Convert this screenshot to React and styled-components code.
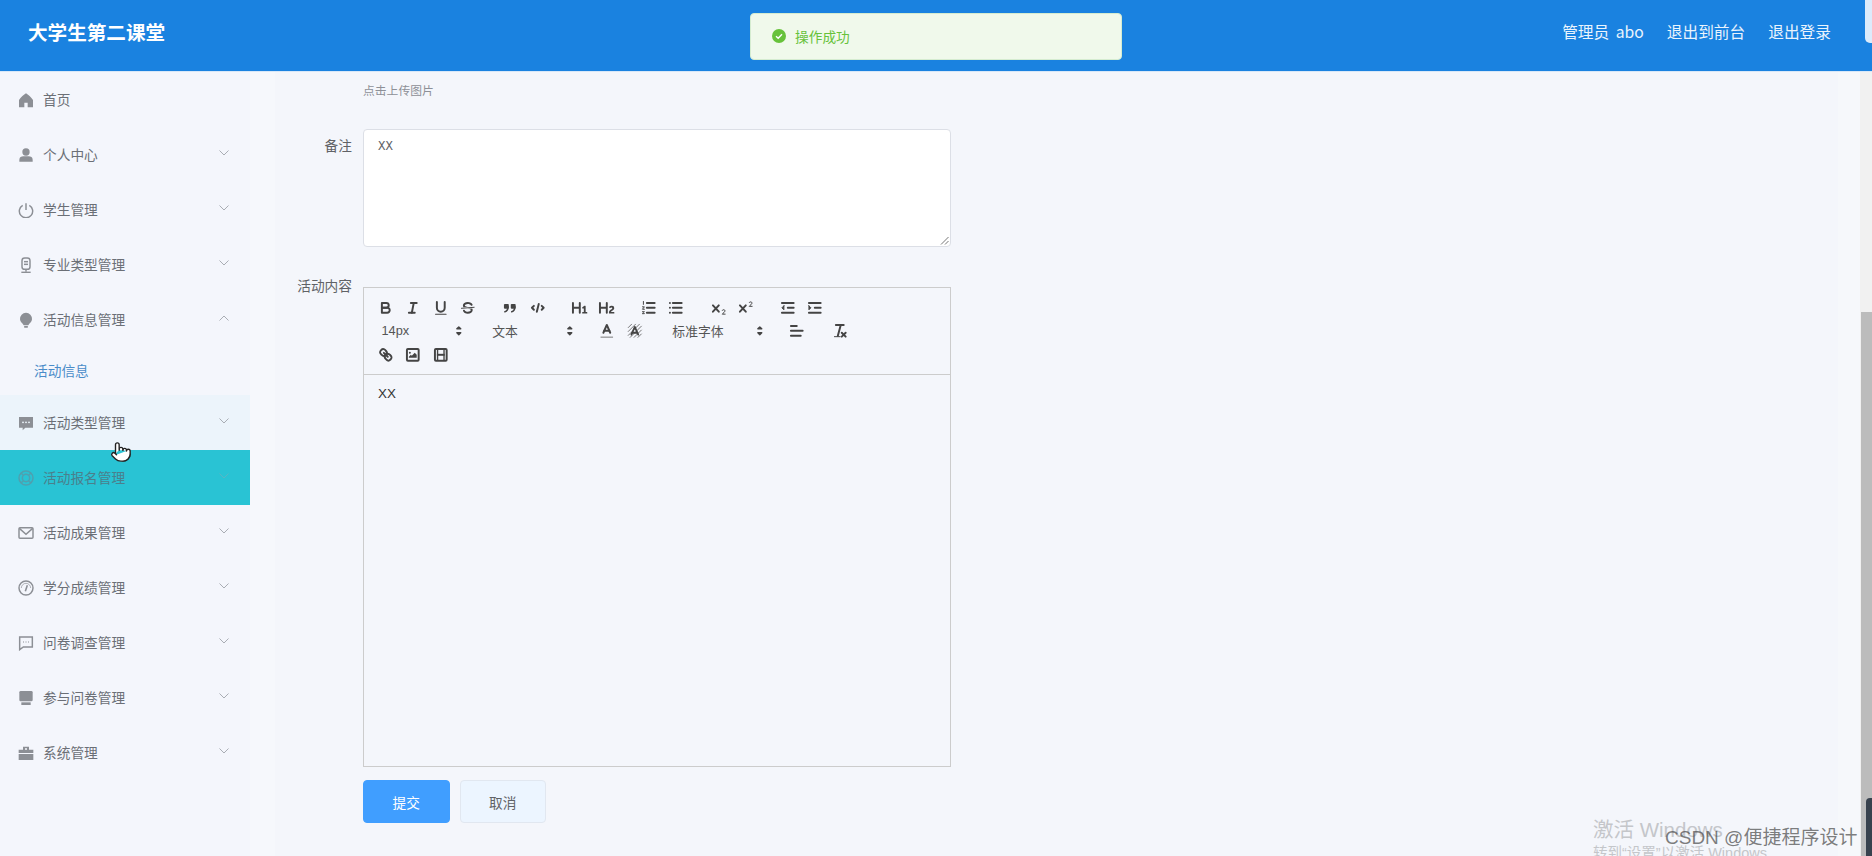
import React from 'react'
import styled, { createGlobalStyle } from 'styled-components'
import { Pointer } from 'lucide-react'

const GlobalStyle = createGlobalStyle`
  html, body {
    margin: 0;
    height: 100%;
    overflow: hidden;
    background: #f4f6fb;
    font-family: "Liberation Sans", "Noto Sans CJK SC", sans-serif;
  }
  * { box-sizing: border-box; }
`

const Page = styled.div`
  position: relative;
  width: 100vw;
  height: 100vh;
  overflow: hidden;
  display: flex;
  flex-direction: column;
`

const Header = styled.header`
  flex: 0 0 71px;
  background: #1a82e0;
  display: flex;
  align-items: center;
  justify-content: space-between;
  padding: 0 41px 8px 28px;
  color: #fff;
`

const Title = styled.div`
  font-size: 19.6px;
  font-weight: 700;
`

const HeaderNav = styled.nav`
  display: flex;
  gap: 23px;
  font-family: "Noto Sans CJK SC", sans-serif;
  font-size: 15.7px;
  word-spacing: 3px;
  color: #eaf4fd;
`

const CornerTab = styled.div`
  position: absolute;
  top: 0;
  right: 0;
  width: 7px;
  height: 43px;
  background: #dcebfb;
  border-bottom-left-radius: 5px;
`

const Toast = styled.div`
  position: absolute;
  top: 13px;
  left: 750px;
  width: 372px;
  height: 47px;
  display: flex;
  align-items: center;
  gap: 9px;
  padding: 0 0 2px 21px;
  background: #f0f9eb;
  border: 1px solid #d5ecd0;
  border-radius: 4px;
  color: #67c23a;
  font-size: 13.7px;
`

const Body = styled.div`
  flex: 1;
  display: flex;
  min-height: 0;
  border-top: 1px solid #d8e8f8;
`

const Sidebar = styled.aside`
  flex: 0 0 250px;
  background: #f4f6fc;
  display: flex;
  flex-direction: column;
`

const MenuRow = styled.div`
  height: ${p => (p.$sub ? '48px' : '55px')};
  flex-shrink: 0;
  display: flex;
  align-items: center;
  gap: 10px;
  padding: 0 21px 0 ${p => (p.$sub ? '34px' : '19px')};
  font-size: 13.7px;
  color: ${p => (p.$sub ? '#4a8cc9' : p.$active ? '#4b7f8c' : '#6b6f76')};
  background: ${p => (p.$active ? '#29c3d4' : p.$hover ? '#ecf4fb' : 'transparent')};

  svg.menu-icon {
    flex: 0 0 16px;
    margin-left: -1px;
    margin-right: -1px;
    color: ${p => (p.$active ? '#4fa0af' : '#8c8f95')};
  }
`

const MenuLabel = styled.span`
  padding-bottom: 2px;
`

const Chevron = styled.svg`
  margin-left: auto;
  margin-bottom: 4px;
  width: 10px;
  height: 6px;
  fill: none;
  stroke: ${p => (p.$active ? '#58b5c4' : '#a9adb4')};
  stroke-width: 1;
`

const Cursor = styled.div`
  position: absolute;
  left: 110px;
  top: 441px;
  width: 22px;
  height: 22px;
  color: #222;
  svg { fill: #fff; }
`

const Gutter = styled.div`
  flex: 0 0 25px;
  background: #f6f8fc;
`

const Main = styled.main`
  flex: 1;
  padding-top: 10px;
  background: #f4f6fb;
`

const Hint = styled.div`
  margin-left: 88px;
  height: 18px;
  line-height: 18px;
  font-size: 11.8px;
  color: #8d9097;
`

const FormRow = styled.div`
  display: flex;
  align-items: flex-start;
  margin-top: ${p => p.$gap}px;
`

const Label = styled.label`
  flex: 0 0 88px;
  padding-right: 11px;
  text-align: right;
  font-size: 13.7px;
  line-height: ${p => p.$lh}px;
  color: #606266;
`

const Memo = styled.div`
  position: relative;
  width: 588px;
  height: 118px;
  padding: 8px 14px;
  background: #fff;
  border: 1px solid #dcdfe6;
  border-radius: 4px;
  font-family: "Liberation Mono", monospace;
  font-size: 12.4px;
  line-height: 18px;
  color: #606266;
`

const ResizeGrip = styled.svg`
  position: absolute;
  right: 1px;
  bottom: 1px;
  width: 9px;
  height: 9px;
  stroke: #777;
  stroke-width: 1;
`

const Editor = styled.div`
  width: 588px;
  height: 480px;
  display: flex;
  flex-direction: column;
  border: 1px solid #ccc;
`

const Toolbar = styled.div`
  display: flex;
  flex-wrap: wrap;
  padding: 8px 8px 7px;
  border-bottom: 1px solid #ccc;
`

const Group = styled.div`
  display: flex;
  margin-right: 14.7px;
`

const ToolButton = styled.div`
  width: 27.4px;
  height: 23.5px;
  display: flex;
  align-items: center;
  justify-content: center;
  svg { width: 17.6px; height: 17.6px; }
`

const Picker = styled.div`
  width: ${p => p.$w}px;
  height: 23.5px;
  display: flex;
  align-items: center;
  justify-content: space-between;
  padding-left: 9.5px;
  font-size: 12.8px;
  color: #555;
  span { padding-bottom: 2px; }
  svg { width: 17.6px; height: 17.6px; margin-right: 0; }
`

const EditorBody = styled.div`
  flex: 1;
  padding: 10px 14px;
  font-size: 13.4px;
  line-height: 18px;
  color: #333;
`

const Actions = styled.div`
  display: flex;
  gap: 10px;
  margin: 13px 0 0 88px;
`

const Button = styled.div`
  width: 86.5px;
  height: 43px;
  display: flex;
  align-items: center;
  justify-content: center;
  border-radius: 4px;
  font-size: 13.7px;
  border: 1px solid ${p => (p.$primary ? '#409eff' : '#e1e7f0')};
  background: ${p => (p.$primary ? '#409eff' : '#ecf5ff')};
  color: ${p => (p.$primary ? '#fff' : '#606266')};
`

const RightStrip = styled.div`
  flex: 0 0 22px;
  background: #f6f8fb;
`

const ScrollTrack = styled.div`
  flex: 0 0 12px;
  background: #f1f1f1;
  padding-top: 240px;
  padding-left: 1px;
`

const ScrollThumb = styled.div`
  height: 100%;
  background: #bcbcbc;
`

const TrayEdge = styled.div`
  position: absolute;
  right: 0;
  bottom: 0;
  width: 6px;
  height: 58px;
  background: #38424e;
  border-top-left-radius: 4px;
`

const Activation = styled.div`
  position: absolute;
  left: 1593px;
  top: 817px;
  color: #c4c6ca;
  font-size: 20.5px;
  line-height: 26px;
  small {
    display: block;
    font-size: 14.5px;
    line-height: 20px;
  }
`

const Watermark = styled.div`
  position: absolute;
  left: 1665px;
  top: 825px;
  font-size: 19px;
  line-height: 26px;
  white-space: nowrap;
  color: rgba(70, 70, 70, 0.7);
`

const Q = ({ children }) => (
  <svg viewBox="0 0 18 18" fill="none" stroke="#444" strokeWidth="2" strokeLinecap="round" strokeLinejoin="round">
    {children}
  </svg>
)

const F = { fill: '#444', stroke: 'none' }
const thin = { strokeWidth: 1 }

const xMark = (
  <>
    <line x1="3" y1="6.5" x2="9" y2="13" />
    <line x1="9" y1="6.5" x2="3" y2="13" />
  </>
)

const toolIcons = {
  bold: <Q><path d="M5,4H9.5A2.5,2.5,0,0,1,12,6.5v0A2.5,2.5,0,0,1,9.5,9H5V4Z" /><path d="M5,9h5.5A2.5,2.5,0,0,1,13,11.5v0A2.5,2.5,0,0,1,10.5,14H5V9Z" /></Q>,
  italic: <Q><line x1="7" x2="13" y1="4" y2="4" /><line x1="5" x2="11" y1="14" y2="14" /><line x1="8" x2="10" y1="14" y2="4" /></Q>,
  underline: <Q><path d="M5,3V9a4,4,0,0,0,4,4H9a4,4,0,0,0,4-4V3" /><rect {...F} x="3" y="15" width="12" height="1" rx=".5" /></Q>,
  strike: (
    <Q>
      <line {...thin} x1="15.5" x2="2.5" y1="8.5" y2="9.5" />
      <path {...F} d="M9.007,8C6.542,7.791,6,7.519,6,6.5,6,5.792,7.283,5,9,5c1.571,0,2.765.679,2.969,1.309a1,1,0,0,0,1.9-.617C13.356,4.106,11.354,3,9,3,6.2,3,4,4.538,4,6.5a3.2,3.2,0,0,0,.5,1.843Z" />
      <path {...F} d="M8.984,10C11.457,10.208,12,10.479,12,11.5c0,.708-1.283,1.5-3,1.5-1.571,0-2.765-.679-2.969-1.309a1,1,0,1,0-1.9.617C4.644,13.894,6.646,15,9,15c2.8,0,5-1.538,5-3.5a3.2,3.2,0,0,0-.5-1.843Z" />
    </Q>
  ),
  quote: (
    <Q>
      <rect {...F} x="3" y="5" width="5" height="5" rx="1" />
      <rect {...F} x="10" y="5" width="5" height="5" rx="1" />
      <path strokeWidth="1.6" d="M7.2,8 C7.2,11 6,12.5 4,13" />
      <path strokeWidth="1.6" d="M14.2,8 C14.2,11 13,12.5 11,13" />
    </Q>
  ),
  code: <Q><polyline points="5 7 3 9 5 11" /><polyline points="13 7 15 9 13 11" /><line x1="10" x2="8" y1="5" y2="13" /></Q>,
  h1: (
    <Q>
      <path {...F} d="M10,4V14a1,1,0,0,1-2,0V10H3v4a1,1,0,0,1-2,0V4A1,1,0,0,1,3,4V8H8V4a1,1,0,0,1,2,0Zm6.06787,9.209H14.98975V7.59863a.54085.54085,0,0,0-.605-.60547h-.62744a1.01119,1.01119,0,0,0-.748.29688L11.645,8.56641a.5435.5435,0,0,0-.022.8584l.28613.30762a.53861.53861,0,0,0,.84717.0332l.09912-.08789a1.2137,1.2137,0,0,0,.2417-.35254h.02246s-.01123.30859-.01123.60547V13.209H12.041a.54085.54085,0,0,0-.605.60547v.43945a.54085.54085,0,0,0,.605.60547h4.02686a.54085.54085,0,0,0,.605-.60547v-.43945A.54085.54085,0,0,0,16.06787,13.209Z" />
    </Q>
  ),
  h2: (
    <Q>
      <path {...F} d="M16.73975,13.81445v.43945a.54085.54085,0,0,1-.605.60547H11.855a.58392.58392,0,0,1-.64893-.60547V14.0127c0-2.90527,3.39941-3.42187,3.39941-4.55469a.77675.77675,0,0,0-.84717-.78125,1.17684,1.17684,0,0,0-.83594.38477c-.2749.26367-.561.374-.85791.13184l-.4292-.34082c-.30811-.24219-.38525-.51758-.1543-.81445a2.97155,2.97155,0,0,1,2.45361-1.17676,2.45393,2.45393,0,0,1,2.68408,2.40918c0,2.45312-3.1792,2.92676-3.27832,3.93848h2.79443A.54085.54085,0,0,1,16.73975,13.81445ZM9,3A.99974.99974,0,0,0,8,4V8H3V4A1,1,0,0,0,1,4V14a1,1,0,0,0,2,0V10H8v4a1,1,0,0,0,2,0V4A.99974.99974,0,0,0,9,3Z" />
    </Q>
  ),
  ol: (
    <Q>
      <line x1="7" x2="15" y1="4" y2="4" />
      <line x1="7" x2="15" y1="9" y2="9" />
      <line x1="7" x2="15" y1="14" y2="14" />
      <line {...thin} x1="3.5" x2="3.5" y1="2.5" y2="5.5" />
      <path {...thin} d="M2.5,8 h2 l-2,2.5 h2" />
      <path {...thin} d="M2.5,13 h2 l-1,1 l1,1 h-2" />
    </Q>
  ),
  ul: (
    <Q>
      <line x1="6" x2="15" y1="4" y2="4" />
      <line x1="6" x2="15" y1="9" y2="9" />
      <line x1="6" x2="15" y1="14" y2="14" />
      <line x1="3" x2="3" y1="4" y2="4" />
      <line x1="3" x2="3" y1="9" y2="9" />
      <line x1="3" x2="3" y1="14" y2="14" />
    </Q>
  ),
  sub: <Q>{xMark}<path {...thin} d="M12.5,11.7 c.3-1.2,3-1.1,2.8.6 c-.2,1.2-1.9,2-2.8,3.2 h3" /></Q>,
  sup: <Q>{xMark}<path {...thin} d="M12.5,3.7 c.3-1.2,3-1.1,2.8.6 c-.2,1.2-1.9,2-2.8,3.2 h3" /></Q>,
  outdent: (
    <Q>
      <line x1="3" x2="15" y1="14" y2="14" />
      <line x1="3" x2="15" y1="4" y2="4" />
      <line x1="9" x2="15" y1="9" y2="9" />
      <polygon strokeWidth="1" fill="#444" points="5 7 5 11 3 9 5 7" />
    </Q>
  ),
  indent: (
    <Q>
      <line x1="3" x2="15" y1="14" y2="14" />
      <line x1="3" x2="15" y1="4" y2="4" />
      <line x1="9" x2="15" y1="9" y2="9" />
      <polygon strokeWidth="1" fill="#444" points="3 7 3 11 5 9 3 7" />
    </Q>
  ),
  color: (
    <Q>
      <line {...thin} x1="3" x2="15" y1="15.5" y2="15.5" stroke="#777" />
      <polyline points="5.5 11 9 3 12.5 11" />
      <line x1="11.63" x2="6.38" y1="9" y2="9" />
    </Q>
  ),
  background: (
    <Q>
      <g stroke="#555" strokeWidth="0.8" strokeLinecap="butt">
        <path d="M2 6 L6 2 M2 10 L10 2 M2 14 L14 2 M4 16 L16 4 M8 16 L16 8 M12 16 L16 12" />
      </g>
      <polyline points="5.5 13 9 5 12.5 13" strokeWidth="1.8" />
      <line x1="11.63" x2="6.38" y1="11" y2="11" strokeWidth="1.8" />
    </Q>
  ),
  align: (
    <Q>
      <line x1="3" x2="15" y1="9" y2="9" />
      <line x1="3" x2="13" y1="14" y2="14" />
      <line x1="3" x2="9" y1="4" y2="4" />
    </Q>
  ),
  clean: (
    <Q>
      <line x1="5" x2="13" y1="3" y2="3" />
      <line x1="3.5" x2="9.35" y1="15" y2="15" strokeWidth="1" />
      <line x1="10" x2="7" y1="3" y2="14" />
      <line x1="11" x2="15" y1="11" y2="15" />
      <line x1="15" x2="11" y1="11" y2="15" />
    </Q>
  ),
  link: (
    <Q>
      <line x1="7" x2="11" y1="7" y2="11" />
      <path d="M8.9,4.577a3.476,3.476,0,0,1,.36,4.679A3.476,3.476,0,0,1,4.577,8.9C3.185,7.5,2.035,6.4,4.217,4.217S7.5,3.185,8.9,4.577Z" />
      <path d="M13.423,9.1a3.476,3.476,0,0,0-4.679-.36,3.476,3.476,0,0,0,.36,4.679c1.392,1.392,2.5,2.542,4.679.36S14.815,10.5,13.423,9.1Z" />
    </Q>
  ),
  image: (
    <Q>
      <rect x="3" y="3" width="12" height="12" rx="1" />
      <circle {...F} cx="6" cy="7" r="1" />
      <polyline {...F} points="5 12 5 11 7 9 8 10 11 7 13 9 13 12 5 12" />
    </Q>
  ),
  video: (
    <Q>
      <rect x="3" y="3" width="12" height="12" rx="1" />
      <rect {...F} x="5" y="3" width="1.4" height="12" />
      <rect {...F} x="11.6" y="3" width="1.4" height="12" />
      <rect {...F} x="5" y="8" width="8" height="2" />
    </Q>
  ),
}

const PickerArrows = () => (
  <svg viewBox="0 0 18 18" fill="#444" stroke="#444" strokeWidth="1.4" strokeLinejoin="round">
    <polygon points="7 11 9 13 11 11 7 11" />
    <polygon points="7 7 9 5 11 7 7 7" />
  </svg>
)

const toolbar = [
  ['bold', 'italic', 'underline', 'strike'],
  ['quote', 'code'],
  ['h1', 'h2'],
  ['ol', 'ul'],
  ['sub', 'sup'],
  ['outdent', 'indent'],
  { picker: '14px', w: 96 },
  { picker: '文本', w: 96 },
  ['color', 'background'],
  { picker: '标准字体', w: 106 },
  ['align'],
  ['clean'],
  ['link', 'image', 'video'],
]

const Glyph = ({ children, solid }) => (
  <svg
    className="menu-icon"
    width="16"
    height="16"
    viewBox="0 0 24 24"
    fill={solid ? 'currentColor' : 'none'}
    stroke={solid ? 'none' : 'currentColor'}
    strokeWidth="2.2"
  >
    {children}
  </svg>
)

const menuIcons = {
  home: <Glyph solid><path d="M12 2 C9 4 4 8 1.5 12 V23 H9.5 V16 H14.5 V23 H22.5 V12 C20 8 15 4 12 2Z" /></Glyph>,
  user: <Glyph solid><circle cx="12" cy="7.5" r="5.5" /><path d="M2 22 V19 C2 15.5 5 14 8 14 H16 C19 14 22 15.5 22 19 V22 Z" /></Glyph>,
  power: <Glyph><path d="M7 5 A10 10 0 1 0 17 5" /><line x1="12" y1="2" x2="12" y2="12" /></Glyph>,
  mic: (
    <Glyph>
      <rect x="6" y="1.5" width="12" height="17" rx="4" />
      <line x1="9" y1="7" x2="15" y2="7" />
      <line x1="9" y1="11" x2="15" y2="11" />
      <line x1="12" y1="18" x2="12" y2="22" />
      <line x1="5" y1="23" x2="19" y2="23" />
    </Glyph>
  ),
  bulb: <Glyph solid><path d="M12 1 A9.5 9.5 0 0 1 21 11 C21 15 17 17 15.5 20 H8.5 C7 17 3 15 3 11 A9.5 9.5 0 0 1 12 1Z" /><rect x="9" y="21" width="6" height="2.5" rx="1" /></Glyph>,
  chat: (
    <Glyph solid>
      <path d="M1.5 3 H22.5 V19 H11 L7 23 V19 H1.5Z" />
      <circle cx="7.5" cy="11" r="1.4" fill="#ecf4fb" />
      <circle cx="12" cy="11" r="1.4" fill="#ecf4fb" />
      <circle cx="16.5" cy="11" r="1.4" fill="#ecf4fb" />
    </Glyph>
  ),
  help: <Glyph><circle cx="12" cy="12" r="10.5" /><circle cx="12" cy="12" r="5.5" /><path d="M4.5 4.5 L8 8 M19.5 4.5 L16 8 M4.5 19.5 L8 16 M19.5 19.5 L16 16" /></Glyph>,
  mail: <Glyph><rect x="1.5" y="4" width="21" height="16" rx="1.5" /><polyline points="2 5 12 14 22 5" /></Glyph>,
  gauge: <Glyph><circle cx="12" cy="12" r="10.5" /><path d="M5 12 A7 7 0 0 1 19 12" strokeWidth="1" /><path d="M14 8 L11 17" strokeWidth="2.4" /></Glyph>,
  dots: (
    <Glyph>
      <path d="M2.5 3 H21.5 V18 H8 L2.5 22Z" />
      <line x1="7.5" y1="10.5" x2="8.5" y2="10.5" />
      <line x1="11.5" y1="10.5" x2="12.5" y2="10.5" />
      <line x1="15.5" y1="10.5" x2="16.5" y2="10.5" />
    </Glyph>
  ),
  screen: <Glyph solid><rect x="2" y="1.5" width="20" height="15.5" rx="2" /><path d="M5 18.5 H19 V22.5 H5Z" /></Glyph>,
  case: <Glyph solid><path d="M7.5 2.5 H16.5 V7 H23 V12 H1 V7 H7.5Z M10.5 5 V7 H13.5 V5Z" fillRule="evenodd" /><rect x="1" y="13.5" width="22" height="9" /></Glyph>,
}

const menu = [
  { icon: 'home', label: '首页', leaf: true },
  { icon: 'user', label: '个人中心' },
  { icon: 'power', label: '学生管理' },
  { icon: 'mic', label: '专业类型管理' },
  { icon: 'bulb', label: '活动信息管理', open: true },
  { sub: true, label: '活动信息', leaf: true },
  { icon: 'chat', label: '活动类型管理', hover: true },
  { icon: 'help', label: '活动报名管理', active: true },
  { icon: 'mail', label: '活动成果管理' },
  { icon: 'gauge', label: '学分成绩管理' },
  { icon: 'dots', label: '问卷调查管理' },
  { icon: 'screen', label: '参与问卷管理' },
  { icon: 'case', label: '系统管理' },
]

function App() {
  return (
    <Page>
      <GlobalStyle />
      <Header>
        <Title>大学生第二课堂</Title>
        <HeaderNav>
          <span>管理员 abo</span>
          <span>退出到前台</span>
          <span>退出登录</span>
        </HeaderNav>
      </Header>
      <CornerTab />
      <Toast>
        <svg width="14" height="14" viewBox="0 0 14 14">
          <circle cx="7" cy="7" r="7" fill="#67c23a" />
          <polyline points="4,7.2 6.2,9.2 10,5.2" fill="none" stroke="#fff" strokeWidth="1.4" />
        </svg>
        操作成功
      </Toast>

      <Body>
        <Sidebar>
          {menu.map(item => (
            <MenuRow key={item.label} $sub={item.sub} $hover={item.hover} $active={item.active}>
              {item.icon && menuIcons[item.icon]}
              <MenuLabel>{item.label}</MenuLabel>
              {!item.leaf && (
                <Chevron viewBox="0 0 10 6" $active={item.active}>
                  <polyline points={item.open ? '0.5,5.5 5,1 9.5,5.5' : '0.5,0.5 5,5 9.5,0.5'} />
                </Chevron>
              )}
            </MenuRow>
          ))}
        </Sidebar>
        <Gutter />
        <Main>
          <Hint>点击上传图片</Hint>
          <FormRow $gap={29}>
            <Label $lh={36}>备注</Label>
            <Memo>
              XX
              <ResizeGrip viewBox="0 0 9 9">
                <line x1="1" y1="8.5" x2="8.5" y2="1" />
                <line x1="5" y1="8.5" x2="8.5" y2="5" />
              </ResizeGrip>
            </Memo>
          </FormRow>
          <FormRow $gap={40}>
            <Label $lh={0}>活动内容</Label>
            <Editor>
              <Toolbar>
                {toolbar.map((group, i) =>
                  group.picker ? (
                    <Group key={i}>
                      <Picker $w={group.w}>
                        <span>{group.picker}</span>
                        <PickerArrows />
                      </Picker>
                    </Group>
                  ) : (
                    <Group key={i}>
                      {group.map(name => (
                        <ToolButton key={name}>{toolIcons[name]}</ToolButton>
                      ))}
                    </Group>
                  )
                )}
              </Toolbar>
              <EditorBody>XX</EditorBody>
            </Editor>
          </FormRow>
          <Actions>
            <Button $primary>提交</Button>
            <Button>取消</Button>
          </Actions>
        </Main>
        <RightStrip />
        <ScrollTrack>
          <ScrollThumb />
        </ScrollTrack>
      </Body>

      <Cursor><Pointer size={22} strokeWidth={1.5} /></Cursor>
      <Activation>
        激活 Windows
        <small>转到“设置”以激活 Windows</small>
      </Activation>
      <Watermark>CSDN @便捷程序设计</Watermark>
      <TrayEdge />
    </Page>
  )
}

export default App
